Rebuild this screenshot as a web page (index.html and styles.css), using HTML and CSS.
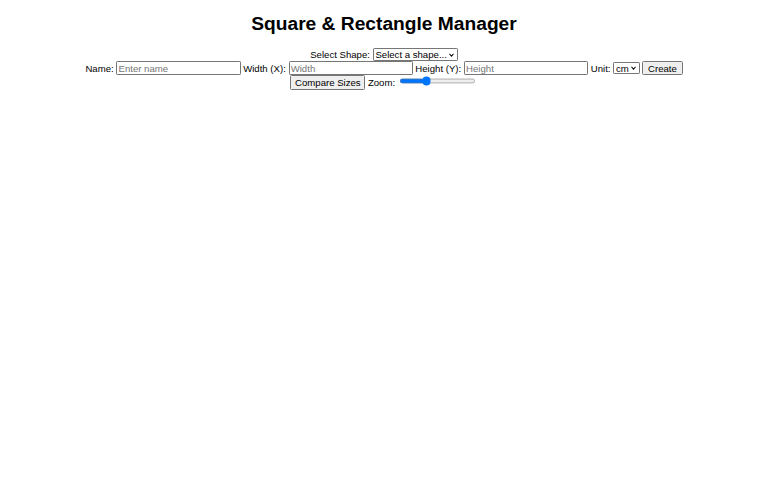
FILE: index.html
```html
<!DOCTYPE html>
<html>
<head>
<meta charset="utf-8">
<title>Square &amp; Rectangle Manager</title>
<link rel="stylesheet" href="styles.css">
</head>
<body class="page">
<h1 class="title">Square &amp; Rectangle Manager</h1>
<div class="controls">
<label class="lbl">Select Shape:</label> <select class="ctl sel sel-shape"><option>Select a shape...</option></select><br>
<label class="lbl">Name:</label> <input class="ctl txt" type="text" placeholder="Enter name"> <label class="lbl">Width (X):</label> <input class="ctl txt" type="number" placeholder="Width"> <label class="lbl">Height (Y):</label> <input class="ctl txt" type="number" placeholder="Height"> <label class="lbl">Unit:</label> <select class="ctl sel sel-unit"><option>cm</option><option>mm</option><option>in</option></select> <button class="ctl btn-create">Create</button><br>
<button class="ctl">Compare Sizes</button> <label class="lbl">Zoom:</label> <input class="ctl" type="range" min="0.5" max="2" step="0.1" value="1">
</div>
</body>
</html>
```
FILE: styles.css
```css
.page {
  zoom: 0.6;
  margin: 8px;
  font-family: "Liberation Sans", Arial, sans-serif;
  background: #fff;
  color: #000;
}
.title {
  text-align: center;
  font-size: 32px;
  margin: 14px 0 22px;
}
.controls {
  text-align: center;
  font-size: 16px;
}
.ctl {
  font-family: "Liberation Sans", Arial, sans-serif;
  font-size: 16px;
}
.txt {
  width: 207px;
  height: 22px;
  box-sizing: border-box;
  padding: 1px 2px;
  border: 1px solid #767676;
  border-radius: 2px;
  -moz-appearance: textfield;
}
.txt::-webkit-outer-spin-button,
.txt::-webkit-inner-spin-button {
  -webkit-appearance: none;
  margin: 0;
}
.txt::placeholder {
  color: #757575;
}
.sel {
  -webkit-appearance: none;
  appearance: none;
  box-sizing: border-box;
  height: 21px;
  padding: 0 14px 0 3px;
  border: 1px solid #767676;
  border-radius: 2px;
  background-color: #fff;
  background-image: url("data:image/svg+xml;utf8,<svg xmlns='http://www.w3.org/2000/svg' width='10' height='6' viewBox='0 0 10 6'><path d='M1 1l4 4 4-4' fill='none' stroke='%23000' stroke-width='1.8'/></svg>");
  background-repeat: no-repeat;
  background-position: right 4px center;
  background-size: 9px 6px;
  color: #000;
  line-height: 19px;
}
.sel-shape {
  width: 142px;
}
.sel-unit {
  width: 44px;
}
.btn-create {
  padding: 1px 8px;
}
```
